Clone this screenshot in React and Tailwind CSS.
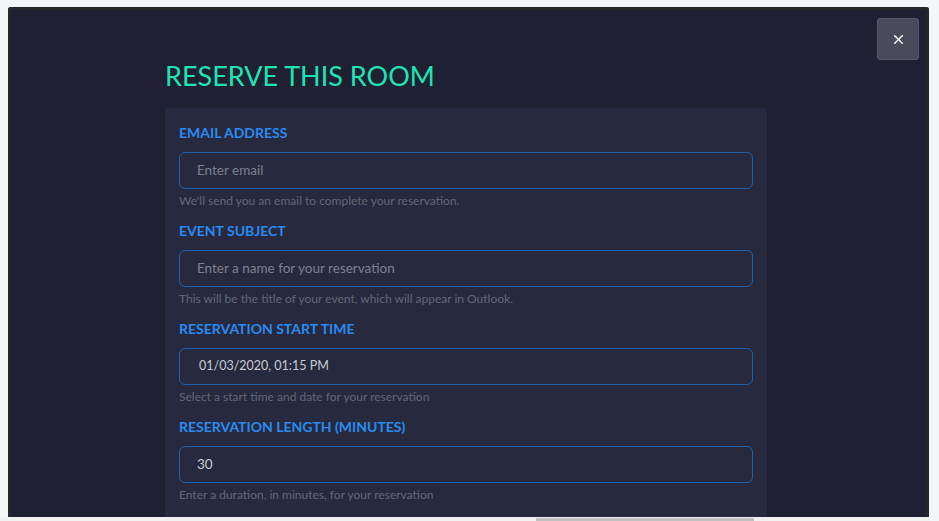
import { X } from "lucide-react";

const fields = [
  { label: "EMAIL ADDRESS", placeholder: "Enter email", help: "We'll send you an email to complete your reservation." },
  { label: "EVENT SUBJECT", placeholder: "Enter a name for your reservation", help: "This will be the title of your event, which will appear in Outlook." },
  { label: "RESERVATION START TIME", value: "01/03/2020, 01:15 PM", help: "Select a start time and date for your reservation", date: true },
  { label: "RESERVATION LENGTH (MINUTES)", value: "30", help: "Enter a duration, in minutes, for your reservation" },
];

export default function App() {
  return (
    <div className="w-[939px] h-[521px] overflow-hidden bg-[#f4f5f7] pt-[7px] pl-[8px] font-['Lato',sans-serif]">
      {/* Modal */}
      <div className="relative w-[921px] h-[510px] overflow-hidden rounded-t-[3px] border-x-[3px] border-t-[3px] border-[#26262b] bg-[#1f2031]">
        <button className="absolute right-[7px] top-[8px] flex h-[42px] w-[42px] items-center justify-center rounded-[3px] border border-[#56566a] bg-[#4a4a5b]">
          <X className="h-[15px] w-[15px] text-white" strokeWidth={2.4} />
        </button>

        <div className="ml-[154px] w-[602px] pt-[49px]">
          <h1 className="text-[27px] leading-[34px] text-[#1ee3b4]">RESERVE THIS ROOM</h1>

          {/* Form card */}
          <div className="mt-[15px] rounded-[4px] bg-[#272a3e] px-[14px] pt-[15px] pb-6">
            {fields.map((f) => (
              <div key={f.label} className="mb-[13px]">
                <div className="text-[14px] leading-[20px] font-bold text-[#2a8af0]">{f.label}</div>
                <div className="mt-[9px] flex h-[37px] items-center rounded-[6px] border border-[#2160a8] px-[17px] text-[13.5px]">
                  {f.value ? (
                    <span className={`text-[#c9cbd4] ${f.date ? "pl-[2px] text-[12.5px]" : ""}`}>{f.value}</span>
                  ) : (
                    <span className="text-[#7d808f]">{f.placeholder}</span>
                  )}
                </div>
                <div className="mt-[5px] text-[12px] leading-[14px] text-[#636678]">{f.help}</div>
              </div>
            ))}
          </div>
        </div>
      </div>

      {/* horizontal scrollbar */}
      <div className="-ml-[8px] h-[4px] w-[929px] bg-[#f1f1f1] pt-[1px]">
        <div className="ml-[536px] h-[3px] w-[218px] bg-[#c1c1c1]" />
      </div>
    </div>
  );
}
